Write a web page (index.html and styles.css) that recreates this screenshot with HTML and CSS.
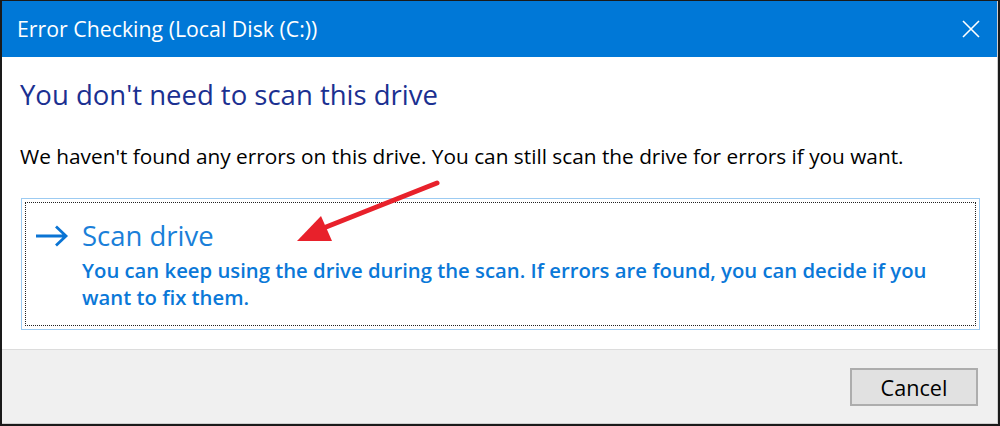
FILE: index.html
```html
<!DOCTYPE html>
<html>
<head>
<meta charset="utf-8">
<link rel="stylesheet" href="styles.css">
</head>
<body>
<div class="window">
  <div class="titlebar">
    <span class="title">Error Checking (Local Disk (C:))</span>
    <svg class="close" width="18" height="18" viewBox="0 0 18 18"><path d="M1 1 L17 17 M17 1 L1 17" stroke="#fff" stroke-width="1.6" fill="none"/></svg>
  </div>
  <div class="content">
    <h1 class="heading">You don't need to scan this drive</h1>
    <p class="body-text">We haven't found any errors on this drive. You can still scan the drive for errors if you want.</p>
    <div class="cmdlink">
      <div class="focus">
        <div class="cmd-title">
          <svg class="cmd-arrow" width="34" height="22" viewBox="0 0 34 22"><path d="M1 11 H31 M21 1.5 L31 11 L21 20.5" stroke="#0a74d4" stroke-width="2.8" fill="none"/></svg>
          <span class="cmd-label">Scan drive</span>
        </div>
        <div class="cmd-desc">You can keep using the drive during the scan. If errors are found, you can decide if you want to fix them.</div>
      </div>
    </div>
  </div>
  <div class="footer">
    <button class="btn">Cancel</button>
  </div>
</div>
<svg class="annot" width="1000" height="426" viewBox="0 0 1000 426">
  <line x1="437" y1="183" x2="316" y2="231" stroke="#e8212b" stroke-width="5" stroke-linecap="round"/>
  <polygon points="297,241 321,216 332,241" fill="#e8212b"/>
</svg>
</body>
</html>
```
FILE: styles.css
```css
html, body {
  margin: 0;
  padding: 0;
}
body {
  position: relative;
  width: 1000px;
  height: 426px;
  background: #1a1a1a;
  font-family: "Open Sans", "Noto Sans", sans-serif;
  overflow: hidden;
}
.window {
  margin: 1px 2px 0 2px;
  height: 423px;
  background: #fff;
  display: flex;
  flex-direction: column;
  box-sizing: border-box;
  border-right: 1px solid #cfcfcf;
  border-bottom: 1px solid #cfcfcf;
}
.titlebar {
  height: 56px;
  flex: none;
  background: #0078d7;
  display: flex;
  align-items: center;
  justify-content: space-between;
  padding: 0 17px 0 15px;
}
.title {
  color: #fff;
  font-size: 21.3px;
  line-height: 28px;
}
.close {
  display: block;
}
.content {
  flex: 1;
  padding: 20px 17px 0 18px;
}
.heading {
  margin: 0;
  font-weight: normal;
  font-size: 27.5px;
  line-height: 36px;
  color: #1b3091;
}
.body-text {
  margin: 29px 0 0 0;
  font-size: 20.8px;
  line-height: 28px;
  color: #000;
}
.cmdlink {
  margin: 28px 0 0 1px;
  border: 1px solid #9ccbf2;
  padding: 3px;
}
.focus {
  border: 1px dotted #222;
  padding: 15px 20px 14px 9px;
}
.cmd-title {
  display: flex;
  align-items: center;
  gap: 13px;
  height: 36px;
}
.cmd-arrow {
  display: block;
}
.cmd-label {
  font-size: 27.5px;
  line-height: 36px;
  color: #1a7fd9;
}
.cmd-desc {
  margin: 3px 0 0 47px;
  font-size: 20.3px;
  line-height: 27px;
  font-weight: 600;
  color: #0a78d8;
}
.footer {
  flex: none;
  height: 74px;
  box-sizing: border-box;
  border-top: 1px solid #dcdcdc;
  background: #f0f0f0;
  display: flex;
  justify-content: flex-end;
  align-items: flex-start;
  padding: 18px 19px 0 0;
}
.btn {
  width: 128px;
  height: 38px;
  background: #e1e1e1;
  border: 2px solid #adadad;
  font-family: "Open Sans", "Noto Sans", sans-serif;
  font-size: 21.6px;
  color: #000;
  padding: 0;
}
.annot {
  position: absolute;
  left: 0;
  top: 0;
  pointer-events: none;
}
```
